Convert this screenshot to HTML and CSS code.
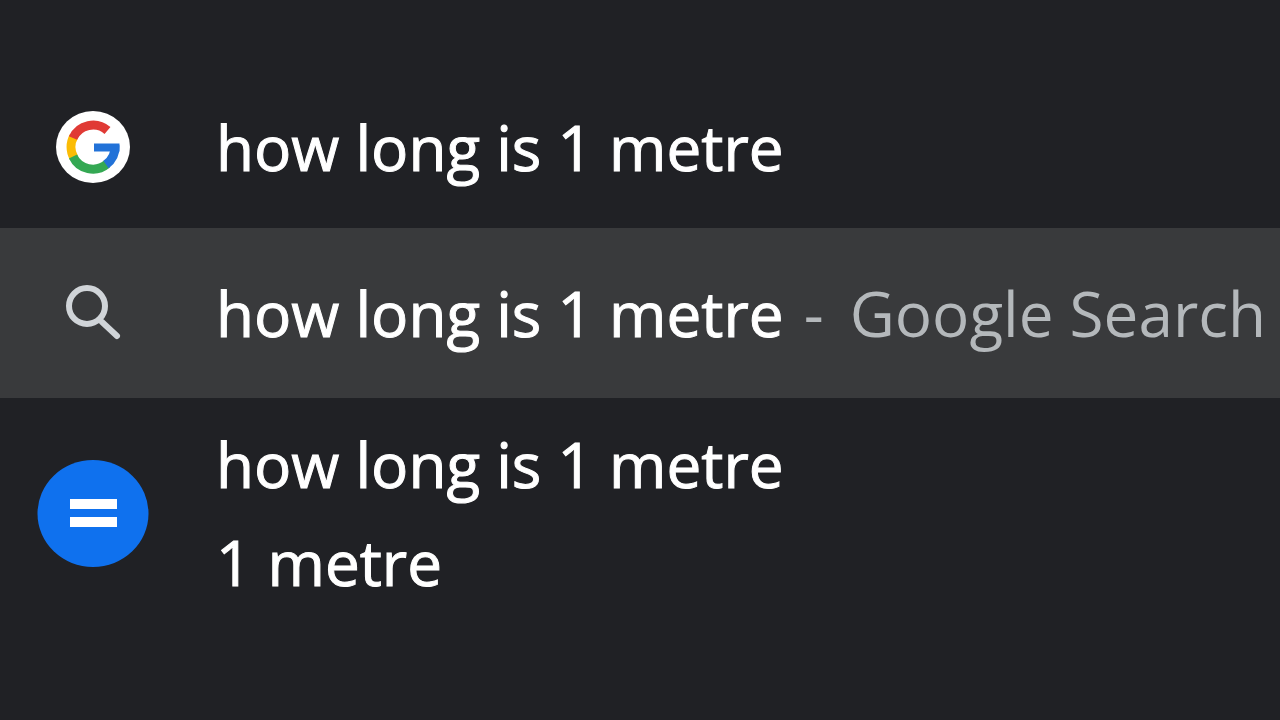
FILE: index.html
```
<!DOCTYPE html>
<html lang="en">
<head>
  <meta charset="utf-8">
  <title>how long is 1 metre</title>
  <link rel="stylesheet" href="styles.css">
</head>
<body>
  <ul class="suggestions">
    <li>
      <a class="suggestion" href="#">
        <span class="icon">
          <svg width="74" height="74" viewBox="0 0 74 74" aria-hidden="true">
            <ellipse cx="37" cy="37" rx="37" ry="36" fill="#fff"/>
            <g fill="none" stroke-width="9">
              <path stroke="#fbbc05" d="M18 26A22 22 0 0 0 18 48"/>
              <path stroke="#34a853" d="M17 46.500A22 22 0 0 0 51 54"/>
              <path stroke="#e03a35" d="M51.500 20.500A22 22 0 0 0 17 28"/>
              <path stroke="#2272d8" d="M59 35.500A22 22 0 0 1 50 54.500"/>
              <path stroke="#2272d8" stroke-width="8" d="M38 37.500H63.500"/>
            </g>
          </svg>
        </span>
        <span class="text">how long is 1 metre</span>
      </a>
    </li>
    <li>
      <a class="suggestion selected" href="#">
        <span class="icon">
          <svg width="60" height="60" viewBox="0 0 60 60" aria-hidden="true">
            <g fill="none" stroke="#d0d4d8">
              <circle cx="24" cy="23" r="18" stroke-width="6"/>
              <path d="M39 39L54 53" stroke-width="6" stroke-linecap="round"/>
            </g>
          </svg>
        </span>
        <span class="text">how long is 1 metre <span class="engine"><span class="dash">-</span> Google Search</span></span>
      </a>
    </li>
    <li>
      <a class="suggestion answer" href="#">
        <span class="icon">
          <svg width="112" height="108" viewBox="0 0 112 108" aria-hidden="true">
            <ellipse cx="56" cy="54.500" rx="55.500" ry="53.500" fill="#0f71ee"/>
            <path fill="#fff" d="M33 40h47v10H33zM33 58h47v10H33z"/>
          </svg>
        </span>
        <span class="text">how long is 1 metre<br>1 metre</span>
      </a>
    </li>
  </ul>
</body>
</html>
```
FILE: styles.css
```
body {
  margin: 0;
  background-color: #202125;
  color: #fff;
  font-family: "Open Sans", "Noto Sans", sans-serif;
  font-size: 62px;
  line-height: 98px;
}

.suggestions {
  list-style: none;
  margin: 0;
  padding: 66px 0 0;
}

.suggestion {
  display: flex;
  align-items: center;
  padding: 32px 0;
  color: inherit;
  text-decoration: none;
  white-space: nowrap;
}

.selected {
  padding: 36px 0;
  background-color: #393a3c;
}

.answer {
  padding: 17px 0;
}

.icon {
  display: flex;
  flex: none;
  justify-content: center;
  width: 186px;
  margin-right: 30px;
}

.text {
  -webkit-text-stroke: 1px;
}

.engine {
  color: #b4b8bb;
  -webkit-text-stroke: 0;
}

.dash {
  margin: 0 10px 0 4px;
}
```
